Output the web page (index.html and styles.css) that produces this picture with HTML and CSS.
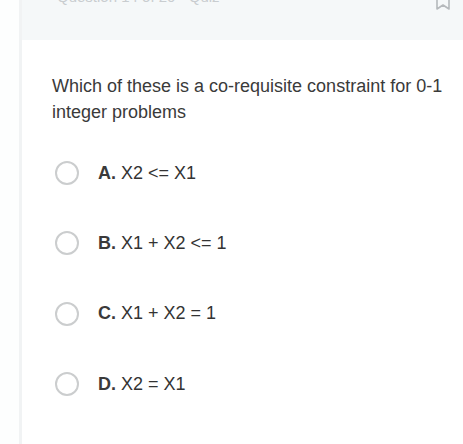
FILE: index.html
```html
<!DOCTYPE html>
<html>
<head>
<meta charset="utf-8">
<link rel="stylesheet" href="styles.css">
</head>
<body>
<div class="page">
  <div class="gutter"></div>
  <div class="main">
    <div class="header">
      <div class="header-title">Question 14 of 20 · Quiz</div>
      <svg class="bookmark" width="16" height="14" viewBox="0 0 16 14"><path d="M2 -4 V11 L8 7 L14 11 V-4" fill="none" stroke="#b5b9bc" stroke-width="1.6" stroke-linejoin="round"/></svg>
    </div>
    <div class="content">
      <p class="question">Which of these is a co-requisite constraint for 0-1 integer problems</p>
      <ul class="options">
        <li class="option"><span class="radio"></span><span class="label"><b>A.</b> X2 &lt;= X1</span></li>
        <li class="option"><span class="radio"></span><span class="label"><b>B.</b> X1 + X2 &lt;= 1</span></li>
        <li class="option"><span class="radio"></span><span class="label"><b>C.</b> X1 + X2 = 1</span></li>
        <li class="option"><span class="radio"></span><span class="label"><b>D.</b> X2 = X1</span></li>
      </ul>
    </div>
  </div>
</div>
</body>
</html>
```
FILE: styles.css
```css
html, body {
  margin: 0;
  padding: 0;
  background: #ffffff;
}
body {
  font-family: "Liberation Sans", Arial, sans-serif;
  color: #333;
  width: 463px;
  height: 444px;
  overflow: hidden;
}
.page {
  display: flex;
  height: 444px;
}
.gutter {
  width: 19px;
  flex: none;
  background: #fdfefe;
  border-right: 3px solid #f1f3f4;
}
.main {
  flex: 1;
  display: flex;
  flex-direction: column;
}
.header {
  height: 40px;
  background: #f5f8f9;
  display: flex;
  justify-content: space-between;
  align-items: flex-start;
  padding: 0 12px 0 35px;
  overflow: hidden;
}
.header-title {
  margin-top: -12px;
  font-size: 15px;
  color: #c9cdd0;
}
.bookmark {
  display: block;
  margin-top: -2px;
}
.content {
  padding: 0 8px 0 30px;
}
.question {
  margin: 33px 0 0;
  font-size: 18px;
  line-height: 26px;
  color: #3a3a3a;
}
.options {
  list-style: none;
  margin: 13px 0 0;
  padding: 0;
}
.option {
  display: flex;
  align-items: center;
  height: 70.3px;
}
.radio {
  width: 20px;
  height: 20px;
  border: 2px solid #cbcdce;
  border-radius: 50%;
  flex: none;
  margin-left: 3px;
}
.label {
  margin-left: 19px;
  font-size: 18px;
  color: #333;
}
.label b {
  font-weight: bold;
  color: #3a3a3a;
}
```
